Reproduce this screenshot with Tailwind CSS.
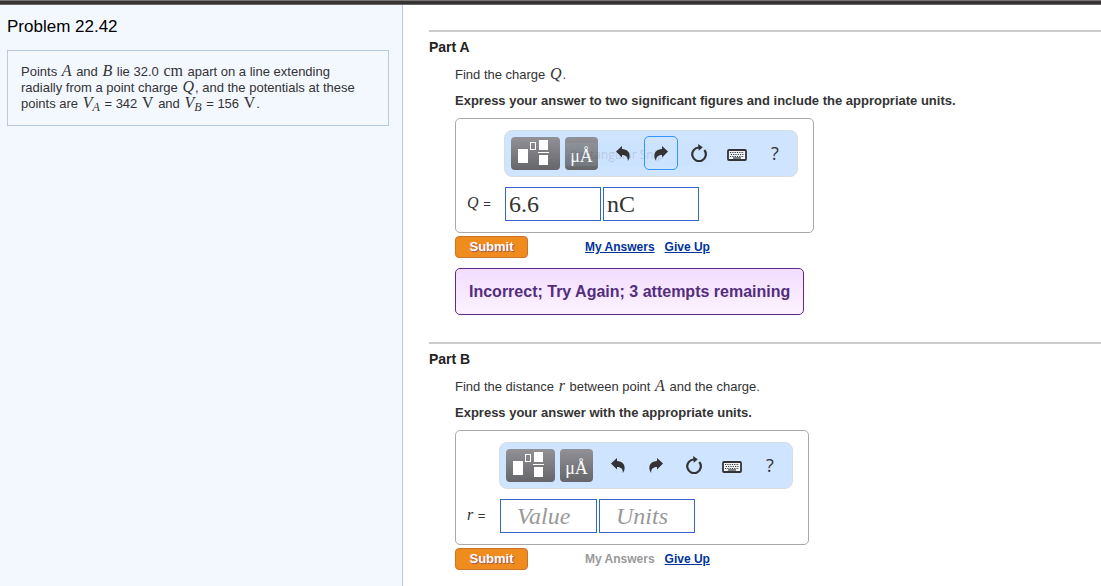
<!DOCTYPE html>
<html lang="en">
  <head>
    <meta charset="UTF-8" />
    <meta name="viewport" content="width=device-width, initial-scale=1.0" />
    <title>Problem 22.42</title>
    <script src="https://cdn.jsdelivr.net/npm/@tailwindcss/browser@4"></script>
  </head>
  <body class="flex min-h-screen flex-col bg-white font-['Liberation_Sans',Arial,sans-serif] text-[13px] leading-4 text-[#333]">
    <!-- shared icons -->
    <svg class="hidden">
      <symbol id="icon-templates" viewBox="0 0 49 33">
        <rect x="7" y="12" width="10" height="14" fill="#fff" />
        <rect x="19.5" y="5.5" width="5" height="7" fill="none" stroke="#fff" />
        <rect x="28" y="3" width="9" height="10" fill="#fff" />
        <rect x="27" y="15" width="11" height="1" fill="#fff" />
        <rect x="28" y="18" width="9" height="10" fill="#fff" />
      </symbol>
      <symbol id="icon-undo" viewBox="0 0 14 15">
        <path d="M0 5.500 6 0v3c5 .3 8 3 7.600 7.800-.2 1.600-.8 3.200-1.800 4.200.4-3.800-1.600-6-5.800-6v2.500z" fill="currentColor" />
      </symbol>
      <symbol id="icon-redo" viewBox="0 0 14 15">
        <path d="M14 5.500 8 0v3C3 3.300 0 6 .4 10.800.6 12.400 1.200 14 2.200 15 1.800 11.200 3.800 9 8 9v2.500z" fill="currentColor" />
      </symbol>
      <symbol id="icon-reset" viewBox="0 0 16 18">
        <path d="M8 3.500a6.800 6.800 0 1 0 5.300 2.500" fill="none" stroke="currentColor" stroke-width="2.200" />
        <path d="M7 0 11.800 3.300 7.800 6.800z" fill="currentColor" />
      </symbol>
      <symbol id="icon-keyboard" viewBox="0 0 20 12">
        <rect x="1" y="1" width="18" height="10" rx="1" fill="#f0f5fb" stroke="currentColor" stroke-width="1.800" />
        <path d="M3 3.500h14M3.800 5.500h13.500M3 7.500h14" stroke="currentColor" stroke-width="1.100" stroke-dasharray="1.200 1.100" />
        <path d="M6 9h8" stroke="currentColor" stroke-width="1.200" />
      </symbol>
    </svg>

    <div class="h-[5px] shrink-0 border-y border-[#666] border-t-[#777] bg-[#383434]"></div>

    <div class="flex flex-1">
      <aside class="w-[403px] shrink-0 border-r border-[#b8cbdc] bg-[#f3f8ff] pt-3 pr-[13px] pl-[7px]">
        <h1 class="text-[17px] leading-5 text-black">Problem 22.42</h1>
        <div class="mt-[13px] border border-[#b8cbdc] p-[13px]">
          <p>
            Points <i class="mx-px font-['Liberation_Serif',serif] text-base leading-0">A</i> and
            <i class="mx-px font-['Liberation_Serif',serif] text-base leading-0">B</i> lie 32.0
            <span class="mx-px font-['Liberation_Serif',serif] text-base leading-0">cm</span> apart on a line extending<br />
            radially from a point charge <i class="mx-px font-['Liberation_Serif',serif] text-base leading-0">Q</i>, and the potentials at these<br />
            points are <i class="mx-px font-['Liberation_Serif',serif] text-base leading-0">V<sub>A</sub></i> = 342
            <span class="mx-px font-['Liberation_Serif',serif] text-base leading-0">V</span> and
            <i class="mx-px font-['Liberation_Serif',serif] text-base leading-0">V<sub>B</sub></i> = 156
            <span class="mx-px font-['Liberation_Serif',serif] text-base leading-0">V</span>.
          </p>
        </div>
      </aside>

      <main class="flex-1 pt-[25px] pl-[26px]">
        <section class="border-t-2 border-[#ccc] pt-[5px]">
          <h2 class="text-sm leading-5 font-bold text-[#222]">Part A</h2>
          <div class="flex flex-col items-start pl-[26px]">
            <p class="mt-2 leading-5">Find the charge <i class="mx-px font-['Liberation_Serif',serif] text-base leading-0">Q</i>.</p>
            <p class="mt-[6px] leading-5 font-bold">Express your answer to two significant figures and include the appropriate units.</p>

            <div class="mt-[7px] rounded-[5px] border border-[#aaa] pt-[11px] pr-[15px] pb-[11px] pl-[11px]">
              <div class="relative ml-[37px] flex items-end rounded-lg border border-[#d8dde3] bg-[#cee4ff] pt-[5px] pr-[5px] pb-[6px] pl-[6px] text-[#333]">
                <button type="button" aria-label="Templates" class="h-[33px] w-[49px] rounded bg-linear-to-b from-[#929197] to-[#65666a]">
                  <svg class="h-[33px] w-[49px]"><use href="#icon-templates" /></svg>
                </button>
                <button type="button" class="ml-[5px] h-[33px] w-[33px] rounded bg-linear-to-b from-[#929197] to-[#65666a] pt-1 font-['Liberation_Serif',serif] text-lg leading-6 text-white">μÅ</button>
                <div class="relative z-10 ml-2 flex gap-1">
                  <button type="button" aria-label="Undo" class="flex size-[34px] items-center justify-center"><svg class="h-[15px] w-[14px]"><use href="#icon-undo" /></svg></button>
                  <button type="button" aria-label="Redo" class="flex size-[34px] items-center justify-center rounded-[5px] border border-[#3395ff]"><svg class="h-[15px] w-[14px]"><use href="#icon-redo" /></svg></button>
                  <button type="button" aria-label="Reset" class="flex size-[34px] items-center justify-center"><svg class="h-[18px] w-4"><use href="#icon-reset" /></svg></button>
                  <button type="button" aria-label="Keyboard" class="flex size-[34px] items-center justify-center pt-1"><svg class="h-3 w-5"><use href="#icon-keyboard" /></svg></button>
                  <button type="button" aria-label="Help" class="size-[34px] font-['Open_Sans',sans-serif] text-lg leading-8">?</button>
                </div>
                <!-- fading tooltip -->
                <span class="pointer-events-none absolute top-3 left-[55px] h-[23px] w-[151px] bg-[#bfe0ff]/10 pl-[10px] font-['Open_Sans',sans-serif] text-xs leading-6 text-[#555]/20">Rectangular Snip</span>
              </div>
              <div class="mt-[10px] flex items-center gap-[2px]">
                <label for="charge-value" class="w-9 text-[13px]"><i class="mr-px font-['Liberation_Serif',serif] text-base leading-0">Q</i> =</label>
                <input id="charge-value" type="text" value="6.6" class="h-[34px] w-24 border border-[#36c] px-[3px] font-['Liberation_Serif',serif] text-2xl" />
                <input id="charge-units" type="text" value="nC" aria-label="Units" class="h-[34px] w-24 border border-[#36c] px-[3px] font-['Liberation_Serif',serif] text-2xl" />
              </div>
            </div>

            <div class="mt-[3px] flex items-center text-xs font-bold">
              <button type="submit" class="h-[22px] w-[73px] rounded border border-[#c9732b] bg-[#ef8c1d] text-[13px] leading-5 text-white text-shadow-[1px_1px_1px_#955]">Submit</button>
              <a href="#" class="ml-[57px] text-[#039] underline">My Answers</a>
              <a href="#" class="ml-[10px] text-[#039] underline">Give Up</a>
            </div>

            <div class="mt-[10px] rounded-[5px] border border-[#5f2a84] bg-linear-to-b from-[#f2dcff] to-[#fdf3ff] px-[13px] py-3 text-base leading-[21px] font-bold text-[#532e7c]">Incorrect; Try Again; 3 attempts remaining</div>
          </div>
        </section>

        <section class="mt-[27px] border-t-2 border-[#ccc] pt-[5px]">
          <h2 class="text-sm leading-5 font-bold text-[#222]">Part B</h2>
          <div class="flex flex-col items-start pl-[26px]">
            <p class="mt-2 leading-5">
              Find the distance <i class="mx-px font-['Liberation_Serif',serif] text-base leading-0">r</i> between point
              <i class="mx-px font-['Liberation_Serif',serif] text-base leading-0">A</i> and the charge.
            </p>
            <p class="mt-[6px] leading-5 font-bold">Express your answer with the appropriate units.</p>

            <div class="mt-[7px] rounded-[5px] border border-[#aaa] pt-[11px] pr-[15px] pb-[11px] pl-[11px]">
              <div class="ml-8 flex items-end rounded-lg border border-[#d8dde3] bg-[#cee4ff] pt-[5px] pr-[5px] pb-[6px] pl-[6px] text-[#333]">
                <button type="button" aria-label="Templates" class="h-[33px] w-[49px] rounded bg-linear-to-b from-[#929197] to-[#65666a]">
                  <svg class="h-[33px] w-[49px]"><use href="#icon-templates" /></svg>
                </button>
                <button type="button" class="ml-[5px] h-[33px] w-[33px] rounded bg-linear-to-b from-[#929197] to-[#65666a] pt-1 font-['Liberation_Serif',serif] text-lg leading-6 text-white">μÅ</button>
                <div class="ml-2 flex gap-1">
                  <button type="button" aria-label="Undo" class="flex size-[34px] items-center justify-center"><svg class="h-[15px] w-[14px]"><use href="#icon-undo" /></svg></button>
                  <button type="button" aria-label="Redo" class="flex size-[34px] items-center justify-center"><svg class="h-[15px] w-[14px]"><use href="#icon-redo" /></svg></button>
                  <button type="button" aria-label="Reset" class="flex size-[34px] items-center justify-center"><svg class="h-[18px] w-4"><use href="#icon-reset" /></svg></button>
                  <button type="button" aria-label="Keyboard" class="flex size-[34px] items-center justify-center pt-1"><svg class="h-3 w-5"><use href="#icon-keyboard" /></svg></button>
                  <button type="button" aria-label="Help" class="size-[34px] font-['Open_Sans',sans-serif] text-lg leading-8">?</button>
                </div>
              </div>
              <div class="mt-[10px] flex items-center gap-[2px]">
                <label for="distance-value" class="w-[31px] text-[13px]"><i class="mr-px font-['Liberation_Serif',serif] text-base leading-0">r</i> =</label>
                <input id="distance-value" type="text" placeholder="Value" class="h-[34px] w-[97px] border border-[#36c] px-4 font-['Liberation_Serif',serif] text-2xl italic placeholder:text-[#999]" />
                <input id="distance-units" type="text" placeholder="Units" aria-label="Units" class="h-[34px] w-24 border border-[#36c] px-4 font-['Liberation_Serif',serif] text-2xl italic placeholder:text-[#999]" />
              </div>
            </div>

            <div class="mt-[3px] flex items-center text-xs font-bold">
              <button type="submit" class="h-[22px] w-[73px] rounded border border-[#c9732b] bg-[#ef8c1d] text-[13px] leading-5 text-white text-shadow-[1px_1px_1px_#955]">Submit</button>
              <span class="ml-[57px] text-[#999]">My Answers</span>
              <a href="#" class="ml-[10px] text-[#039] underline">Give Up</a>
            </div>
          </div>
        </section>
      </main>
    </div>
  </body>
</html>
